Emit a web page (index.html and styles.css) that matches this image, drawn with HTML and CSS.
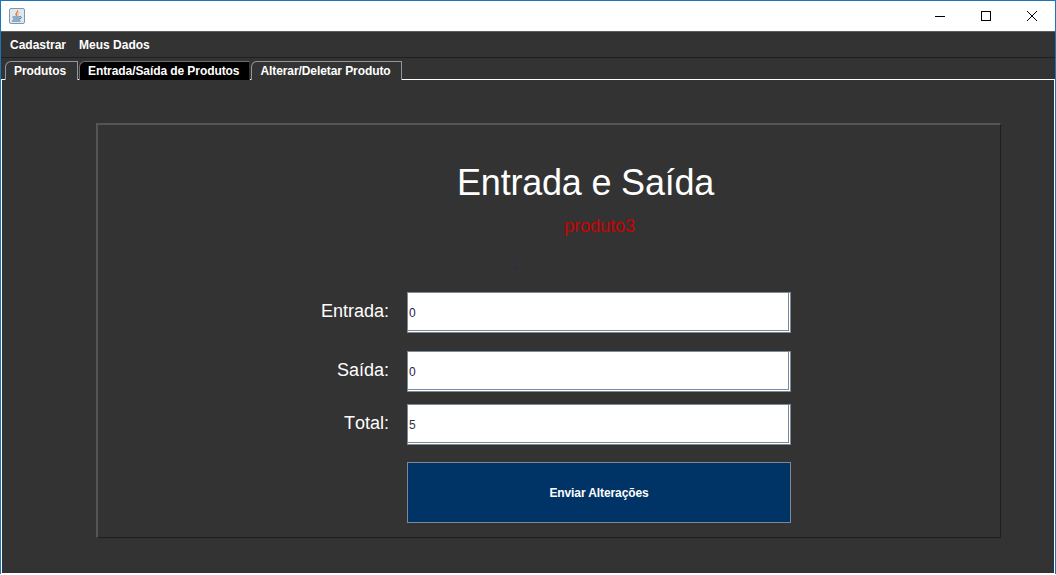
FILE: index.html
```html
<!DOCTYPE html>
<html lang="pt-BR">

<head>
    <meta charset="UTF-8">
    <title>Entrada e Saída</title>
    <link rel="stylesheet" href="styles.css">
</head>

<body>
    <div class="window">
        <div class="titlebar">
            <svg class="app-icon" width="16" height="16" viewBox="0 0 16 16">
                <rect x="0.5" y="0.5" width="15" height="15" rx="1.5" fill="#dfe8f1" stroke="#7f97ad" />
                <path d="M8.5 2.5C9.5 4 6.5 5 7 6.5c.2.6.7 1 1 1.5" fill="none" stroke="#e8772e" stroke-width="1.4" />
                <path d="M10 4.5C9 5.5 8.6 6 9.2 7.2" fill="none" stroke="#f0a050" />
                <path d="M3.5 9h7M4 11h6.5M3 13h8.5" fill="none" stroke="#3f6f9c" />
                <path d="M10.5 8.5c2.5-.5 2.5 2-.5 2.5" fill="none" stroke="#3f6f9c" />
            </svg>
            <div class="win-buttons">
                <svg width="46" height="30" viewBox="0 0 46 30">
                    <path d="M18 15.5h10" stroke="#000" fill="none" />
                </svg>
                <svg width="46" height="30" viewBox="0 0 46 30">
                    <rect x="18.5" y="10.5" width="9" height="9" stroke="#000" fill="none" />
                </svg>
                <svg width="46" height="30" viewBox="0 0 46 30">
                    <path d="M18 10l10 10M28 10l-10 10" stroke="#000" fill="none" />
                </svg>
            </div>
        </div>

        <div class="menubar">
            <span class="menu-item">Cadastrar</span>
            <span class="menu-item">Meus Dados</span>
        </div>

        <div class="tabs">
            <span class="tab tab-first">Produtos</span>
            <span class="tab tab-active">Entrada/Saída de Produtos</span>
            <span class="tab">Alterar/Deletar Produto</span>
        </div>

        <div class="tab-content">
            <div class="panel">
                <h1 class="title">Entrada e Saída</h1>
                <p class="product">produto3</p>
                <span class="speck"></span>
                <div class="form">
                    <label class="form-label">Entrada:</label>
                    <div class="field">0</div>
                    <label class="form-label">Saída:</label>
                    <div class="field">0</div>
                    <label class="form-label">Total:</label>
                    <div class="field field-total">5</div>
                    <div class="send-button">Enviar Alterações</div>
                </div>
            </div>
        </div>
    </div>
</body>

</html>
```

FILE: styles.css
```css
* {
    box-sizing: border-box;
}

html,
body {
    margin: 0;
    padding: 0;
    background-color: #fff;
}

body {
    width: 1056px;
    height: 575px;
    overflow: hidden;
    font-family: "Liberation Sans", Arial, sans-serif;
}

.window {
    width: 1056px;
    height: 574px;
    border: 1px solid #1b75b9;
    display: flex;
    flex-direction: column;
    background-color: #333;
}

.titlebar {
    height: 30px;
    flex: none;
    background-color: #fff;
    display: flex;
    align-items: center;
    justify-content: space-between;
    padding-left: 8px;
}

.app-icon {
    margin-top: -1px;
}

.win-buttons {
    display: flex;
}

.win-buttons svg {
    display: block;
}

.menubar {
    height: 27px;
    flex: none;
    display: flex;
    align-items: center;
    gap: 13px;
    padding: 0 0 0 9px;
    background-color: #333;
    border-top: 1px solid #5e5e5e;
    border-bottom: 1px solid #1f1f1f;
}

.menu-item {
    color: #fff;
    font-size: 12px;
    font-weight: bold;
}

.tabs {
    height: 22px;
    flex: none;
    display: flex;
    align-items: flex-end;
    padding-left: 4px;
    background-color: #333;
    border-bottom: 1px solid #fff;
}

.tab {
    height: 19px;
    margin-bottom: -1px;
    padding: 0 10px 0 8px;
    margin-right: 1px;
    color: #fff;
    font-size: 12px;
    font-weight: bold;
    letter-spacing: -0.08px;
    line-height: 19px;
    background-color: #333;
    border: 1px solid #8e979f;
    border-bottom: none;
    border-top-left-radius: 6px;
}

.tab-first {
    padding-right: 11px;
}

.tab-active {
    background-color: #000;
    border-color: #333;
    border-top-color: #6e6e6e;
    border-left-color: #6e6e6e;
}

.tab-content {
    flex: 1;
    padding: 43px 53px 35px 94px;
    background-color: #333;
    border: 1px solid #fff;
    border-top: none;
}

.panel {
    position: relative;
    height: 415px;
    padding-top: 37px;
    border: 1px solid #1f1f1f;
    border-top: 2px solid #555;
    border-left: 2px solid #555;
}

.title {
    margin: 0 0 0 359px;
    color: #fff;
    font-size: 36px;
    font-weight: normal;
    letter-spacing: -0.2px;
    line-height: 42px;
}

.product {
    margin: 12px 0 0 466px;
    color: #cc0000;
    font-size: 18px;
    line-height: 21px;
}

.speck {
    position: absolute;
    left: 416px;
    top: 142px;
    width: 2px;
    height: 2px;
    background-color: #2b2560;
}

.form {
    display: grid;
    grid-template-columns: 291px 384px;
    grid-template-rows: 59px 53px 58px 61px;
    column-gap: 18px;
    margin-top: 55px;
}

.form-label {
    color: #fff;
    font-size: 18px;
    font-kerning: none;
    line-height: 21px;
    text-align: right;
    padding-top: 9px;
}

.field {
    height: 41px;
    padding: 11px 0 0 1px;
    background-color: #fff;
    color: #2b2050;
    font-size: 12px;
    line-height: 18px;
    border: 1px solid #7a8a99;
    box-shadow: inset -1px -1px 0 #fff, inset -2px -2px 0 #7a8a99;
}

.field-total {
    color: #333;
}

.send-button {
    grid-column: 2;
    display: flex;
    align-items: center;
    justify-content: center;
    background-color: #003366;
    border: 1px solid #7a8a99;
    color: #fff;
    font-size: 12px;
    font-weight: bold;
    letter-spacing: -0.1px;
}
```
